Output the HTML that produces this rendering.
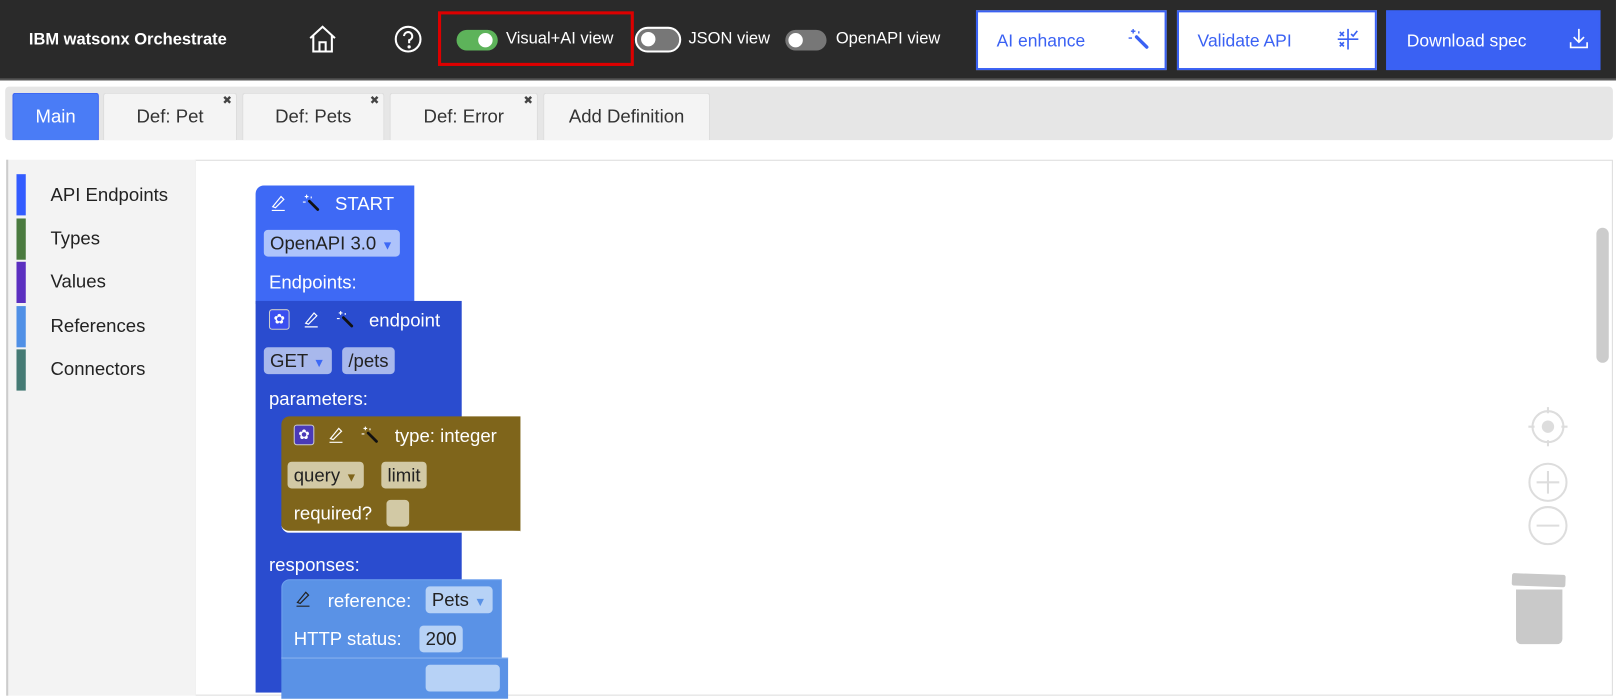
<!DOCTYPE html>
<html><head><meta charset="utf-8"><style>
*{box-sizing:border-box;margin:0;padding:0}
body{width:1616px;height:672px;background:#fff;position:relative;overflow:hidden;font-family:"Liberation Sans",sans-serif}
#r{position:absolute;left:0;top:0;width:1568px;height:652px;transform:scale(1.0306);transform-origin:0 0}
.a{position:absolute}
.hdr{left:0;top:0;width:1568px;height:78px;background:#2a2a2a;border-bottom:2px solid #555}
.ht{color:#fff;font-size:16px;font-weight:bold}
.tog{width:40px;height:20px;border-radius:10px}
.knob{width:14px;height:14px;border-radius:50%;background:#fff;top:3px}
.btn{height:58px;top:10px;background:#fff;border:2px solid #3a61f3;color:#3a61f3;font-size:17px;padding:18px 0 0 18px}
.tab{top:90px;height:46px;background:#f4f4f4;border:1px solid #ddd;border-bottom:none;border-radius:3px 3px 0 0;font-size:18px;color:#333;text-align:center;line-height:44px}
.x{font-size:11px;color:#444;right:4px;position:absolute;line-height:normal}
.cat{left:16px;width:9px;height:40px}
.cl{left:49px;font-size:18px;color:#222}
.w{color:#fff;font-size:18px}
.f{border-radius:4px;font-size:18px;color:#222;padding:0 6px;height:26px;line-height:26px}
</style></head><body><div id="r">
<svg width="0" height="0" style="position:absolute"><defs>
<symbol id="wand" viewBox="0 0 20 20"><path d="M8 8 L17 17" stroke="#111" stroke-width="3" stroke-linecap="round"/><path d="M5 1V5M3 3H7M1 9H4M10 3V5" stroke="#fff" stroke-width="1.2"/></symbol>
<symbol id="pen" viewBox="0 0 20 20"><path d="M4 14 L13 3 L16 6 L7 15 Z M3 18H17" fill="none" stroke="#fff" stroke-width="1.3"/></symbol>
<symbol id="pend" viewBox="0 0 20 20"><path d="M4 14 L13 3 L16 6 L7 15 Z M3 18H17" fill="none" stroke="#222" stroke-width="1.3"/></symbol>
</defs></svg>
<div class="a hdr"></div>
<div class="a ht" style="left:28px;top:30px">IBM watsonx Orchestrate</div>
<svg class="a" style="left:298px;top:23px" width="30" height="30" viewBox="0 0 30 30" fill="none" stroke="#fff" stroke-width="2"><path d="M3 14 L15 3 L27 14 M6 11 V27 H24 V11 M12 27 V18 H18 V27"/></svg>
<svg class="a" style="left:382px;top:24px" width="28" height="28" viewBox="0 0 28 28" fill="none" stroke="#fff" stroke-width="2"><circle cx="14" cy="14" r="12"/><path d="M10 11 a4 4 0 1 1 5 4 v3"/><circle cx="15" cy="21.5" r="0.6" fill="#fff"/></svg>
<div class="a" style="left:425px;top:11px;width:190px;height:53px;border:3px solid #d00"></div>
<div class="a tog" style="left:443px;top:29px;background:#5db35a"></div>
<div class="a knob" style="left:464px;top:32px;background:#fff"></div>
<div class="a ht" style="left:491px;top:29px;font-weight:normal">Visual+AI view</div>
<div class="a tog" style="left:616px;top:26px;width:45px;height:25px;background:#777;border:2px solid #fff;border-radius:13px"></div>
<div class="a knob" style="left:622px;top:31px"></div>
<div class="a ht" style="left:668px;top:29px;font-weight:normal">JSON view</div>
<div class="a tog" style="left:762px;top:29px;background:#777"></div>
<div class="a knob" style="left:765px;top:32px"></div>
<div class="a ht" style="left:811px;top:29px;font-weight:normal">OpenAPI view</div>
<div class="a btn" style="left:947px;width:185px">AI enhance</div>
<svg class="a" style="left:1094px;top:27px" width="22" height="22" viewBox="0 0 20 20"><path d="M8 8 L17 17" stroke="#3a61f3" stroke-width="3" stroke-linecap="round"/><path d="M5 1V5M3 3H7M1 9H4M10 3V5" stroke="#3a61f3" stroke-width="1.2"/></svg>
<div class="a btn" style="left:1142px;width:194px">Validate API</div>
<svg class="a" style="left:1297px;top:27px" width="22" height="22" viewBox="0 0 22 22" fill="none" stroke="#3a61f3" stroke-width="1.6"><path d="M11 1V21M1 11H21M3 4L7 8M7 4L3 8M14 6L16 8L20 3M3 14L7 18M7 14L3 18"/></svg>
<div class="a btn" style="left:1345px;width:208px;background:#3a61f3;color:#fff;border-color:#3a61f3">Download spec</div>
<svg class="a" style="left:1522px;top:26px" width="20" height="22" viewBox="0 0 20 22" fill="none" stroke="#fff" stroke-width="1.6"><path d="M10 2 V15 M5 10 L10 15 L15 10 M2 15 V20 H18 V15"/></svg>
<div class="a" style="left:5px;top:84px;width:1560px;height:52px;background:#e6e6e6;border-radius:4px"></div>
<div class="a tab" style="left:12px;width:84px;background:#4a7cf6;color:#fff;border-color:#3a61f3">Main</div>
<div class="a tab" style="left:100px;width:130px">Def: Pet<span class="x" style="top:0">✖</span></div>
<div class="a tab" style="left:235px;width:138px">Def: Pets<span class="x" style="top:0">✖</span></div>
<div class="a tab" style="left:378px;width:144px">Def: Error<span class="x" style="top:0">✖</span></div>
<div class="a tab" style="left:527px;width:162px">Add Definition</div>
<div class="a" style="left:189px;top:155px;width:1376px;height:520px;border:1px solid #ddd"></div>
<div class="a" style="left:6px;top:155px;width:184px;height:520px;background:#f3f3f3;border-left:2px solid #ccc"></div>
<div class="a cat" style="top:169px;background:#335cff"></div><div class="a cl" style="top:179px">API Endpoints</div>
<div class="a cat" style="top:212px;background:#4a7a3f"></div><div class="a cl" style="top:221px">Types</div>
<div class="a cat" style="top:254px;background:#5b2fc0"></div><div class="a cl" style="top:263px">Values</div>
<div class="a cat" style="top:297px;background:#5090e6"></div><div class="a cl" style="top:306px">References</div>
<div class="a cat" style="top:339px;background:#457a74"></div><div class="a cl" style="top:348px">Connectors</div>
<div class="a" style="left:1549px;top:221px;width:12px;height:131px;background:#ccc;border-radius:6px"></div>
<svg class="a" style="left:1480px;top:393px" width="44" height="150" viewBox="0 0 44 150" fill="none" stroke="#ddd" stroke-width="2"><circle cx="22" cy="21" r="15"/><circle cx="22" cy="21" r="5" fill="#ddd"/><path d="M22 2V8M22 34V40M3 21H9M35 21H41"/><circle cx="22" cy="75" r="18"/><path d="M22 64V86M11 75H33"/><circle cx="22" cy="117" r="18"/><path d="M11 117H33"/></svg>
<div class="a" style="left:1467px;top:557px;width:52px;height:12px;background:#c9c9c9;transform:rotate(2deg);border-radius:2px"></div>
<div class="a" style="left:1471px;top:572px;width:45px;height:53px;background:#c9c9c9;border-radius:0 0 5px 5px"></div>
<!-- blocks -->
<div class="a" style="left:248px;top:180px;width:154px;height:115px;background:#3e69f5;border-radius:8px 0 0 0"></div>
<svg class="a" style="left:261px;top:188px" width="18" height="18"><use href="#pen"/></svg>
<svg class="a" style="left:293px;top:188px" width="18" height="18"><use href="#wand"/></svg>
<div class="a w" style="left:325px;top:188px">START</div>
<div class="a f" style="left:256px;top:223px;background:#aec3fb">OpenAPI 3.0 <span style="color:#3e69f5;font-size:12px">▼</span></div>
<div class="a w" style="left:261px;top:264px">Endpoints:</div>
<div class="a" style="left:248px;top:292px;width:200px;height:380px;background:#2a4ccf"></div>
<div class="a" style="left:261px;top:300px;width:20px;height:20px;background:#3a4ff0;border:1px solid #ccc;border-radius:3px;color:#fff;font-size:13px;text-align:center;line-height:18px">✿</div>
<svg class="a" style="left:293px;top:301px" width="18" height="18"><use href="#pen"/></svg>
<svg class="a" style="left:326px;top:301px" width="18" height="18"><use href="#wand"/></svg>
<div class="a w" style="left:358px;top:301px">endpoint</div>
<div class="a f" style="left:256px;top:337px;background:#a8b8ec">GET <span style="color:#3e69f5;font-size:12px">▼</span></div>
<div class="a f" style="left:332px;top:337px;background:#a8b8ec">/pets</div>
<div class="a w" style="left:261px;top:377px">parameters:</div>
<div class="a" style="left:273px;top:404px;width:232px;height:113px;background:#7f651b;border-radius:8px 0 0 8px;border-bottom:2px solid #fff"></div>
<div class="a" style="left:285px;top:412px;width:20px;height:20px;background:#4a3ab8;border:1px solid #ccc;border-radius:3px;color:#fff;font-size:13px;text-align:center;line-height:18px">✿</div>
<svg class="a" style="left:317px;top:413px" width="18" height="18"><use href="#pen"/></svg>
<svg class="a" style="left:350px;top:413px" width="18" height="18"><use href="#wand"/></svg>
<div class="a w" style="left:383px;top:413px">type: integer</div>
<div class="a f" style="left:279px;top:448px;background:#d2c9a5">query <span style="color:#7f651b;font-size:12px">▼</span></div>
<div class="a f" style="left:370px;top:448px;background:#d2c9a5">limit</div>
<div class="a w" style="left:285px;top:488px">required?</div>
<div class="a" style="left:375px;top:485px;width:22px;height:26px;background:#d2c9a5;border-radius:4px"></div>
<div class="a w" style="left:261px;top:538px">responses:</div>
<div class="a" style="left:273px;top:562px;width:214px;height:78px;background:#5a92e6;border-radius:8px 0 0 0;border:1px solid #6fa0ee"></div>
<svg class="a" style="left:285px;top:572px" width="18" height="18"><use href="#pend"/></svg>
<div class="a w" style="left:318px;top:573px">reference:</div>
<div class="a f" style="left:413px;top:569px;background:#b7d2f6">Pets <span style="color:#5a92e6;font-size:12px">▼</span></div>
<div class="a w" style="left:285px;top:610px">HTTP status:</div>
<div class="a f" style="left:407px;top:607px;background:#b7d2f6">200</div>
<div class="a" style="left:273px;top:638px;width:220px;height:40px;background:#5a92e6;border-top:1px solid #8ab2ef"></div>
<div class="a f" style="left:413px;top:645px;background:#b7d2f6;width:72px"></div>
</div></body></html>
